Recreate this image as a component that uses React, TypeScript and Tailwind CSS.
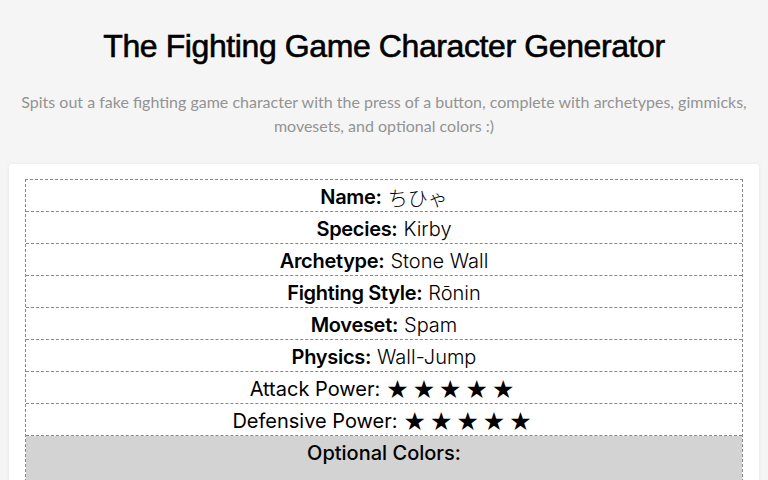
import React from "react";

const rows: { label: string; value: string; bold?: boolean; jp?: boolean; stars?: boolean }[] = [
  { label: "Name:", value: "ちひゃ", bold: true, jp: true },
  { label: "Species:", value: "Kirby", bold: true },
  { label: "Archetype:", value: "Stone Wall", bold: true },
  { label: "Fighting Style:", value: "Rōnin", bold: true },
  { label: "Moveset:", value: "Spam", bold: true },
  { label: "Physics:", value: "Wall-Jump", bold: true },
  { label: "Attack Power:", value: "★★★★★", stars: true },
  { label: "Defensive Power:", value: "★★★★★", stars: true },
];

export default function App() {
  return (
    <div className="min-h-screen bg-[#f5f5f5] px-[9px] text-black font-['Inter','Noto_Sans_CJK_JP',sans-serif]">
      {/* Header */}
      <header className="pt-[28px] text-center">
        <h1 className="font-['Liberation_Sans',sans-serif] text-[32px] leading-[36px] font-normal tracking-[-0.4px] [-webkit-text-stroke:0.6px_black]">
          The Fighting Game Character Generator
        </h1>
        <p className="mt-[26px] px-[4px] font-['Lato',sans-serif] text-[16px] leading-[24px] text-[#939393]">
          Spits out a fake fighting game character with the press of a button, complete with archetypes, gimmicks,
          movesets, and optional colors :)
        </p>
      </header>

      {/* Card */}
      <main className="mt-[26px] rounded-[3px] bg-white px-[16px] pt-[15px] pb-[16px] shadow-[0_0_4px_rgba(0,0,0,0.06)]">
        <div className="border border-dashed border-[#888] text-[20px] leading-[31px]">
          {rows.map((r) => (
            <div key={r.label} className="flex h-[32px] items-center justify-center gap-[6px] border-b border-dashed border-[#888] pt-[4px] whitespace-pre">
              <span className={r.bold ? "font-semibold tracking-[-0.3px]" : "font-normal"}>{r.label}</span>
              {r.stars ? (
                <span className="text-[25px] leading-[20px] tracking-[4px] font-['DejaVu_Sans',sans-serif]">{r.value}</span>
              ) : (
                <span className={r.jp ? "font-['Noto_Sans_CJK_JP',sans-serif] font-light" : "font-light"}>{r.value}</span>
              )}
            </div>
          ))}
          <div className="h-[60px] bg-[#d3d3d3] pt-[2px] text-center">
            <span className="font-medium">Optional Colors:</span>
          </div>
        </div>
      </main>
    </div>
  );
}
